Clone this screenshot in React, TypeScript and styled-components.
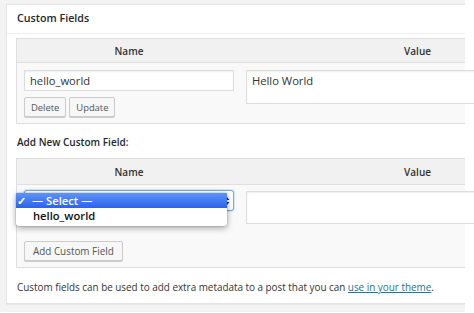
import React from 'react'
import styled, { createGlobalStyle } from 'styled-components'

const GlobalStyle = createGlobalStyle`
  html, body {
    margin: 0;
    padding: 0;
    background: #fff;
    overflow: hidden;
  }
  body {
    font-family: 'Open Sans', 'Liberation Sans', sans-serif;
    color: #333;
  }
`

const Page = styled.div`
  width: 465px;
  padding: 4px 0 8px 6px;
  box-sizing: border-box;
  background: #f3f3f3;
`

const Panel = styled.div`
  background: #fff;
  border: 1px solid #e5e5e5;
  border-right: none;
  box-shadow: 0 1px 1px rgba(0, 0, 0, 0.04);
`

const PanelTitle = styled.h2`
  margin: 0;
  height: 28px;
  line-height: 27px;
  padding-left: 10px;
  font-size: 10.7px;
  font-weight: 600;
  color: #23282d;
  border-bottom: 1px solid #eee;
`

const Inside = styled.div`
  padding: 4px 0 0 9px;
`

const FieldTable = styled.table`
  width: 100%;
  table-layout: fixed;
  border-collapse: separate;
  border-spacing: 0;
  background: #f9f9f9;
  border: 1px solid #dfdfdf;
  border-right: none;
`

const HeadCell = styled.th<{ $h: number; $w?: number; $right?: boolean }>`
  height: ${p => p.$h}px;
  width: ${p => (p.$w ? `${p.$w}px` : 'auto')};
  padding: 0 ${p => (p.$right ? '34px' : '0')} 0 0;
  background: #f1f1f1;
  border-bottom: 1px solid #dfdfdf;
  font-size: 10px;
  font-weight: 600;
  color: #333;
  text-align: ${p => (p.$right ? 'right' : 'center')};
`

const NameCell = styled.td<{ $top?: number }>`
  vertical-align: top;
  padding: ${p => p.$top ?? 7}px 6px 6px 7px;
`

const ValueCell = styled.td<{ $top?: number }>`
  vertical-align: top;
  padding: ${p => p.$top ?? 7}px 0 6px 5px;
  overflow: visible;
`

const TextInput = styled.div`
  width: 210px;
  height: 21px;
  box-sizing: border-box;
  border: 1px solid #ddd;
  box-shadow: inset 0 1px 2px rgba(0, 0, 0, 0.07);
  background: #fff;
  padding: 0 5px;
  font-size: 11.2px;
  line-height: 19px;
  color: #333;
`

const TextArea = styled.div<{ $h: number }>`
  width: 240px;
  height: ${p => p.$h}px;
  box-sizing: border-box;
  border: 1px solid #ddd;
  box-shadow: inset 0 1px 2px rgba(0, 0, 0, 0.07);
  background: #fff;
  padding: 2px 5px;
  font-size: 11.2px;
  line-height: 15px;
  color: #333;
`

const ButtonRow = styled.div`
  display: flex;
  gap: 3px;
  margin-top: 6px;
`

const Button = styled.span<{ $wide?: boolean }>`
  display: inline-flex;
  align-items: center;
  height: 20px;
  box-sizing: border-box;
  padding: 0 ${p => (p.$wide ? '8px' : '6px')};
  border: 1px solid #ccc;
  border-radius: 2px;
  background: #f7f7f7;
  box-shadow: 0 1px 0 #ccc;
  font-size: ${p => (p.$wide ? '9.9px' : '9.4px')};
  color: #555;
`

const SubTitle = styled.p`
  margin: 0;
  height: 34px;
  line-height: 36px;
  padding-left: 1px;
  font-size: 10px;
  font-weight: 600;
  color: #23282d;
`

const SelectWrap = styled.div`
  position: relative;
  width: 210px;
`

const SelectBox = styled.div`
  display: flex;
  align-items: center;
  justify-content: space-between;
  height: 21px;
  box-sizing: border-box;
  border: 1px solid #7aa7e0;
  border-radius: 3px;
  box-shadow: 0 0 2px rgba(30, 140, 190, 0.6);
  background: #fff;
  padding: 0 3px 0 6px;
  font-size: 10px;
`

const EnterNew = styled.div`
  margin-top: 3px;
  font-size: 9.5px;
  line-height: 12px;
  color: #555;
  text-decoration: underline;
`

const Dropdown = styled.div`
  position: absolute;
  left: -8px;
  top: 3px;
  width: 211px;
  background: #fff;
  border-radius: 3px;
  box-shadow: 0 2px 6px rgba(0, 0, 0, 0.35), 0 0 0 1px rgba(0, 0, 0, 0.08);
  padding-bottom: 3px;
`

const Option = styled.div<{ $active?: boolean }>`
  display: flex;
  height: 15px;
  line-height: 15px;
  padding-left: ${p => (p.$active ? '1px' : '17px')};
  font-size: 11.2px;
  font-weight: 600;
  color: ${p => (p.$active ? '#fff' : '#111')};
  background: ${p => (p.$active ? 'linear-gradient(#5d94f7, #2a62ec)' : 'transparent')};
`

const Check = styled.span`
  width: 15px;
`

const AddButtonWrap = styled.div`
  margin-top: 12px;
`

const Footer = styled.p`
  margin: 0;
  padding: 12px 0 9px 10px;
  font-size: 9.9px;
  line-height: 14px;
  color: #333;
`

const Link = styled.a`
  color: #21759b;
  text-decoration: underline;
`

const Arrows = () => (
  <svg width="6" height="10" viewBox="0 0 6 10">
    <path d="M0.5 4 L3 1 L5.5 4 Z M0.5 6 L3 9 L5.5 6 Z" fill="#333" />
  </svg>
)

const App: React.FC = () => {
  return (
    <>
      <GlobalStyle />
      <Page>
        <Panel>
          <PanelTitle>Custom Fields</PanelTitle>
          <Inside>
            <FieldTable>
              <thead>
                <tr>
                  <HeadCell $h={23} $w={224}>Name</HeadCell>
                  <HeadCell $h={23} $right>Value</HeadCell>
                </tr>
              </thead>
              <tbody>
                <tr>
                  <NameCell>
                    <TextInput>hello_world</TextInput>
                    <ButtonRow>
                      <Button>Delete</Button>
                      <Button>Update</Button>
                    </ButtonRow>
                  </NameCell>
                  <ValueCell>
                    <TextArea $h={34}>Hello World</TextArea>
                  </ValueCell>
                </tr>
              </tbody>
            </FieldTable>

            <SubTitle>Add New Custom Field:</SubTitle>

            <FieldTable>
              <thead>
                <tr>
                  <HeadCell $h={25} $w={224}>Name</HeadCell>
                  <HeadCell $h={25} $right>Value</HeadCell>
                </tr>
              </thead>
              <tbody>
                <tr>
                  <NameCell $top={5}>
                    <SelectWrap>
                      <SelectBox>
                        <span>— Select —</span>
                        <Arrows />
                      </SelectBox>
                      <EnterNew>Enter new</EnterNew>
                      <Dropdown>
                        <Option $active>
                          <Check>✓</Check>— Select —
                        </Option>
                        <Option>hello_world</Option>
                      </Dropdown>
                    </SelectWrap>
                    <AddButtonWrap>
                      <Button $wide>Add Custom Field</Button>
                    </AddButtonWrap>
                  </NameCell>
                  <ValueCell $top={6}>
                    <TextArea $h={33} />
                  </ValueCell>
                </tr>
              </tbody>
            </FieldTable>
          </Inside>
          <Footer>
            Custom fields can be used to add extra metadata to a post that you can{' '}
            <Link>use in your theme</Link>.
          </Footer>
        </Panel>
      </Page>
    </>
  )
}

export default App
